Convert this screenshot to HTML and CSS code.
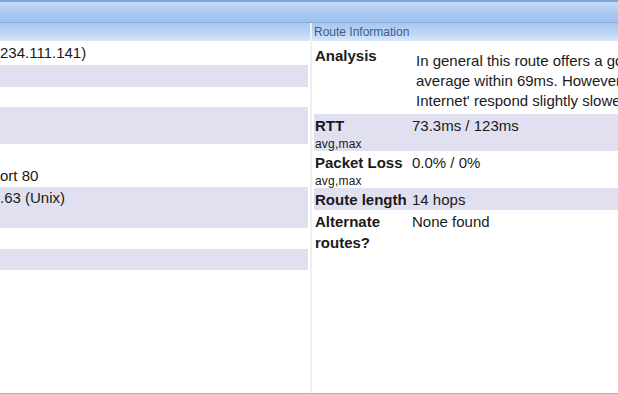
FILE: index.html
```html
<!DOCTYPE html>
<html lang="en">
<head>
    <meta charset="UTF-8">
    <title>Route Information</title>
    <link rel="stylesheet" href="styles.css">
</head>
<body>
    <div class="window">
        <div class="titlebar"></div>

        <div class="panes">
            <div class="pane left">
                <div class="pane-head"></div>
                <div class="rows">
                    <div class="lrow h24 pad3">234.111.141)</div>
                    <div class="lrow alt h22"></div>
                    <div class="lrow h20"></div>
                    <div class="lrow alt h37"></div>
                    <div class="lrow h43 pad5">&nbsp;<br>ort 80</div>
                    <div class="lrow alt h41 pad2">.63 (Unix)</div>
                    <div class="lrow h21"></div>
                    <div class="lrow alt h21"></div>
                </div>
            </div>

            <div class="pane right">
                <div class="pane-head">Route Information</div>
                <div class="info">
                    <div class="irow analysis">
                        <div class="label">Analysis</div>
                        <div class="value">
                            In general this route offers a good performance with an<br>
                            average within 69ms. However, some hosts on the 'Greater<br>
                            Internet' respond slightly slower than expected.
                        </div>
                    </div>
                    <div class="irow alt">
                        <div class="label">RTT<small>avg,max</small></div>
                        <div class="value">73.3ms / 123ms</div>
                    </div>
                    <div class="irow">
                        <div class="label">Packet Loss<small>avg,max</small></div>
                        <div class="value">0.0% / 0%</div>
                    </div>
                    <div class="irow alt">
                        <div class="label">Route length</div>
                        <div class="value">14 hops</div>
                    </div>
                    <div class="irow">
                        <div class="label">Alternate routes?</div>
                        <div class="value">None found</div>
                    </div>
                </div>
            </div>
        </div>
    </div>
</body>
</html>
```

FILE: styles.css
```css
* {
    margin: 0;
    padding: 0;
    box-sizing: border-box;
}

body {
    width: 618px;
    height: 394px;
    overflow: hidden;
    background: #fff;
    font-family: "Liberation Sans", Arial, sans-serif;
    font-size: 15px;
    color: #1a1a1a;
}

.window {
    height: 394px;
    display: flex;
    flex-direction: column;
    border-bottom: 1px solid #a3b5c9;
}

.titlebar {
    height: 23px;
    flex: none;
    border-top: 2px solid #7ea7db;
    border-bottom: 1px solid #86acdf;
    background: linear-gradient(#c6dcf7, #a7c7ef 60%, #9fc1ec);
}

.panes {
    flex: 1;
    display: flex;
    min-height: 0;
}

.pane {
    overflow: hidden;
}

.pane.left {
    width: 312px;
    flex: none;
    border-right: 2px solid #f0f0f0;
}

.pane.right {
    flex: 1;
}

.pane-head {
    height: 18px;
    padding-left: 2px;
    font-size: 12px;
    line-height: 18px;
    color: #3b5b8e;
    white-space: nowrap;
    background: linear-gradient(#a8c6ee, #c3d9f5 70%, #d9e8fa);
}

/* left pane rows */
.rows {
    padding-right: 2px;
}

.lrow {
    padding-top: 1px;
    line-height: 18px;
    white-space: nowrap;
}

.lrow.pad2 { padding-top: 2px; }
.lrow.pad3 { padding-top: 3px; }
.lrow.pad5 { padding-top: 5px; }

.alt {
    background: #e0e0f1;
}

.h20 { height: 20px; }
.h21 { height: 21px; }
.h22 { height: 22px; }
.h24 { height: 24px; }
.h37 { height: 37px; }
.h41 { height: 41px; }
.h43 { height: 43px; }

/* route information */
.info {
    padding-left: 2px;
}

.irow {
    display: grid;
    grid-template-columns: 98px 1fr;
    padding-top: 1px;
    white-space: nowrap;
}

.irow .label {
    padding-left: 1px;
    font-weight: bold;
    line-height: 21px;
    white-space: normal;
}

.irow .label small {
    display: block;
    font-weight: normal;
    font-size: 12px;
    line-height: 16px;
    letter-spacing: 0.2px;
}

.irow .value {
    line-height: 21px;
}

.irow.alt .label small,
.irow .label small {
    margin-bottom: -1px;
}

.irow.analysis {
    height: 73px;
    padding-top: 4px;
}

.irow.analysis .value {
    padding: 6px 0 0 4px;
    line-height: 20px;
}
```
